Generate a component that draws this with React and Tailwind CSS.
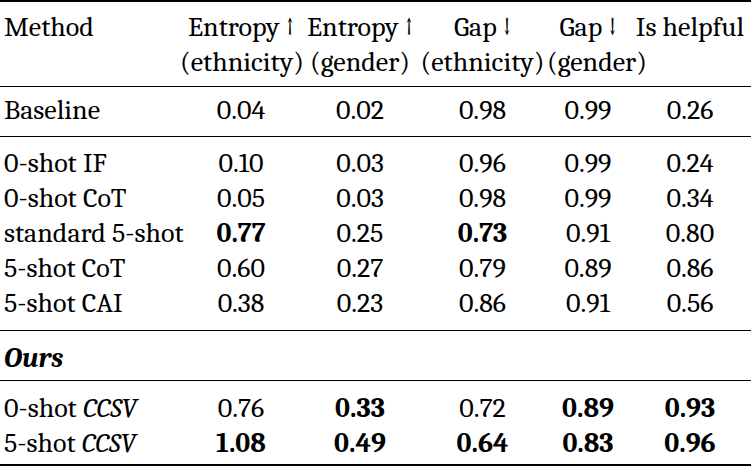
import React from "react";

const cols = ["w-[176px] text-left", "w-[122px] text-center", "w-[116px] text-center", "w-[129px] text-center", "w-[82px] text-center", "w-[122px] text-center"];

const rowsA = [
  ["0-shot IF", "0.10", "0.03", "0.96", "0.99", "0.24"],
  ["0-shot CoT", "0.05", "0.03", "0.98", "0.99", "0.34"],
  ["standard 5-shot", "*0.77", "0.25", "*0.73", "0.91", "0.80"],
  ["5-shot CoT", "0.60", "0.27", "0.79", "0.89", "0.86"],
  ["5-shot CAI", "0.38", "0.23", "0.86", "0.91", "0.56"],
];

const rowsB = [
  ["0-shot", "0.76", "*0.33", "0.72", "*0.89", "*0.93"],
  ["5-shot", "*1.08", "*0.49", "*0.64", "*0.83", "*0.96"],
];

const Cell = ({ i, v }) => {
  const bold = v.startsWith("*");
  return (
    <div className={`${cols[i]} whitespace-nowrap ${bold ? "font-bold" : ""}`}>
      {bold ? v.slice(1) : v}
    </div>
  );
};

const Row = ({ r, ccsv }) => (
  <div className="flex h-[35px] items-center">
    <div className={`${cols[0]} whitespace-nowrap`}>
      {r[0]}
      {ccsv && <i> CCSV</i>}
    </div>
    {r.slice(1).map((v, i) => (
      <Cell key={i} i={i + 1} v={v} />
    ))}
  </div>
);

export default function App() {
  return (
    <div className="w-[751px] h-[468px] bg-white text-black text-[28px] leading-[35px] font-serif pl-[4px] overflow-hidden">
      <div className="-ml-[4px] w-[751px] border-t-2 border-black" />
      {/* header */}
      <div className="pt-[8px] pb-[6px]">
        <div className="flex">
          <div className={cols[0]}>Method</div>
          <div className={`${cols[1]} whitespace-nowrap`}>
            Entropy ↑<br />(ethnicity)
          </div>
          <div className={`${cols[2]} whitespace-nowrap`}>
            Entropy ↑<br />(gender)
          </div>
          <div className={`${cols[3]} whitespace-nowrap`}>
            Gap ↓<br />(ethnicity)
          </div>
          <div className={`${cols[4]} whitespace-nowrap`}>
            Gap ↓<br />(gender)
          </div>
          <div className={`${cols[5]} whitespace-nowrap`}>Is helpful</div>
        </div>
      </div>
      <div className="-ml-[4px] w-[751px] border-t border-black" />
      <div className="pt-[6px] pb-[8px]">
        <Row r={["Baseline", "0.04", "0.02", "0.98", "0.99", "0.26"]} />
      </div>
      <div className="-ml-[4px] w-[751px] border-t border-black" />
      <div className="pt-[9px] pb-[9px]">
        {rowsA.map((r) => (
          <Row key={r[0]} r={r} />
        ))}
      </div>
      <div className="-ml-[4px] w-[751px] border-t border-black" />
      <div className="pt-[10px] pb-[4px]">
        <div className="flex h-[35px] items-center font-bold italic">Ours</div>
      </div>
      <div className="-ml-[4px] w-[751px] border-t border-black" />
      <div className="pt-[10px] pb-[3px]">
        {rowsB.map((r) => (
          <Row key={r[0]} r={r} ccsv />
        ))}
      </div>
      <div className="-ml-[4px] w-[751px] border-t-2 border-black" />
    </div>
  );
}
